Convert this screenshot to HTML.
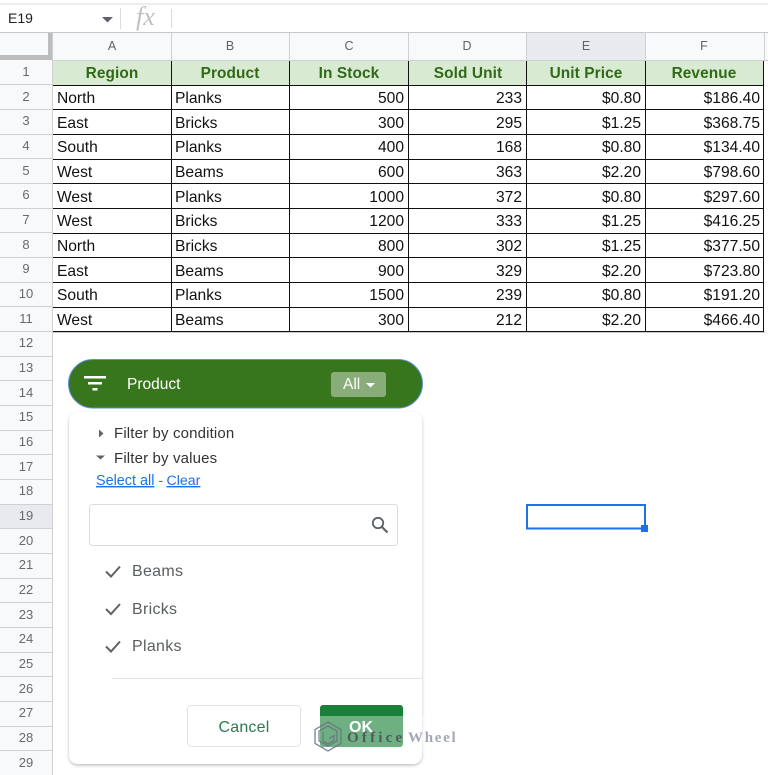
<!DOCTYPE html>
<html><head><meta charset="utf-8"><style>
html,body{margin:0;padding:0;background:#fff;width:768px;height:775px;overflow:hidden}
svg{display:block;font-family:"Liberation Sans",Arial,sans-serif;filter:blur(.3px)}
.d{font-size:15.6px;fill:#111}
.r{font-size:15.6px;fill:#111;text-anchor:end}
.h{font-size:15.4px;font-weight:bold;fill:#2f6a16;text-anchor:middle;letter-spacing:.1px}
.c{font-size:12.5px;fill:#5f6368;text-anchor:middle}
.n{font-size:13px;fill:#666a6e;text-anchor:middle}
.p{font-size:15px;fill:#333}
.f{font-size:16px;fill:#5a5e62;letter-spacing:.3px}
</style></head><body>
<svg width="768" height="775" viewBox="0 0 768 775" xmlns="http://www.w3.org/2000/svg">
<rect width="768" height="775" fill="#fff"/>
<rect x="0" y="3" width="768" height="2" fill="#eceef0"/>
<text x="8" y="23" font-size="14" fill="#202124">E19</text>
<path d="M102 17h11l-5.500 5.500z" fill="#5f6368"/>
<rect x="120" y="8" width="1" height="21" fill="#dadce0"/>
<rect x="171" y="9" width="1" height="19" fill="#dadce0"/>
<text x="136" y="25" font-family="Liberation Serif" font-style="italic" font-size="26" fill="#bcbfc3">fx</text>
<rect x="0" y="32" width="768" height="1" fill="#c8c9cb"/>

<!-- headers -->
<rect x="0" y="33" width="768" height="27" fill="#f8f9fa"/>
<rect x="527" y="33" width="118" height="27" fill="#e8eaed"/>
<rect x="0" y="60" width="52" height="715" fill="#f8f9fa"/>
<rect x="0" y="504" width="52" height="24" fill="#e8eaed"/>
<rect x="48" y="33" width="4" height="27" fill="#bdbdbd"/>
<rect x="0" y="55" width="52" height="5" fill="#bdbdbd"/>
<g fill="#cfd0d2">
<rect x="52" y="33" width="1" height="27"/><rect x="171" y="33" width="1" height="27"/><rect x="289" y="33" width="1" height="27"/><rect x="408" y="33" width="1" height="27"/><rect x="526" y="33" width="1" height="27"/><rect x="645" y="33" width="1" height="27"/><rect x="764" y="33" width="1" height="27"/>
<rect x="52" y="60" width="716" height="1"/>
<rect x="52" y="60" width="1" height="715"/>
<rect x="0" y="84" width="52" height="1"/><rect x="0" y="109" width="52" height="1"/><rect x="0" y="134" width="52" height="1"/><rect x="0" y="158" width="52" height="1"/><rect x="0" y="183" width="52" height="1"/><rect x="0" y="208" width="52" height="1"/><rect x="0" y="232" width="52" height="1"/><rect x="0" y="257" width="52" height="1"/><rect x="0" y="282" width="52" height="1"/><rect x="0" y="306" width="52" height="1"/><rect x="0" y="331" width="52" height="1"/><rect x="0" y="356" width="52" height="1"/><rect x="0" y="380" width="52" height="1"/><rect x="0" y="405" width="52" height="1"/><rect x="0" y="430" width="52" height="1"/><rect x="0" y="454" width="52" height="1"/><rect x="0" y="479" width="52" height="1"/><rect x="0" y="504" width="52" height="1"/><rect x="0" y="528" width="52" height="1"/><rect x="0" y="553" width="52" height="1"/><rect x="0" y="578" width="52" height="1"/><rect x="0" y="602" width="52" height="1"/><rect x="0" y="627" width="52" height="1"/><rect x="0" y="652" width="52" height="1"/><rect x="0" y="676" width="52" height="1"/><rect x="0" y="701" width="52" height="1"/><rect x="0" y="726" width="52" height="1"/><rect x="0" y="750" width="52" height="1"/>
</g>
<text class="c" x="112" y="50">A</text><text class="c" x="230" y="50">B</text><text class="c" x="349" y="50">C</text><text class="c" x="467" y="50">D</text><text class="c" x="586" y="50">E</text><text class="c" x="704" y="50">F</text>
<text class="n" x="26" y="76">1</text><text class="n" x="26" y="101">2</text><text class="n" x="26" y="125">3</text><text class="n" x="26" y="150">4</text><text class="n" x="26" y="175">5</text><text class="n" x="26" y="199">6</text><text class="n" x="26" y="224">7</text><text class="n" x="26" y="249">8</text><text class="n" x="26" y="273">9</text><text class="n" x="26" y="298">10</text><text class="n" x="26" y="323">11</text><text class="n" x="26" y="347">12</text><text class="n" x="26" y="372">13</text><text class="n" x="26" y="397">14</text><text class="n" x="26" y="421">15</text><text class="n" x="26" y="446">16</text><text class="n" x="26" y="471">17</text><text class="n" x="26" y="495">18</text><text class="n" x="26" y="520">19</text><text class="n" x="26" y="545">20</text><text class="n" x="26" y="569">21</text><text class="n" x="26" y="594">22</text><text class="n" x="26" y="619">23</text><text class="n" x="26" y="643">24</text><text class="n" x="26" y="668">25</text><text class="n" x="26" y="693">26</text><text class="n" x="26" y="717">27</text><text class="n" x="26" y="742">28</text><text class="n" x="26" y="767">29</text>

<!-- table -->
<rect x="53" y="61" width="711" height="24" fill="#d9ead3"/>
<g fill="#111">
<rect x="171" y="61" width="1" height="271"/><rect x="289" y="61" width="1" height="271"/><rect x="408" y="61" width="1" height="271"/><rect x="526" y="61" width="1" height="271"/><rect x="645" y="61" width="1" height="271"/><rect x="763" y="61" width="1" height="271"/>
<rect x="53" y="85" width="711" height="1"/><rect x="53" y="109" width="711" height="1"/><rect x="53" y="134" width="711" height="1"/><rect x="53" y="159" width="711" height="1"/><rect x="53" y="183" width="711" height="1"/><rect x="53" y="208" width="711" height="1"/><rect x="53" y="233" width="711" height="1"/><rect x="53" y="257" width="711" height="1"/><rect x="53" y="282" width="711" height="1"/><rect x="53" y="307" width="711" height="1"/><rect x="53" y="331" width="711" height="1"/>
</g>
<rect x="53" y="332" width="712" height="1" fill="#c8c8c8"/>
<text class="h" x="112" y="78">Region</text><text class="h" x="230" y="78">Product</text><text class="h" x="349" y="78">In Stock</text><text class="h" x="468" y="78">Sold Unit</text><text class="h" x="586" y="78">Unit Price</text><text class="h" x="704" y="78">Revenue</text>

<text class="d" x="57" y="103">North</text><text class="d" x="175" y="103">Planks</text><text class="r" x="404" y="103">500</text><text class="r" x="522" y="103">233</text><text class="r" x="641" y="103">$0.80</text><text class="r" x="760" y="103">$186.40</text>
<text class="d" x="57" y="128">East</text><text class="d" x="175" y="128">Bricks</text><text class="r" x="404" y="128">300</text><text class="r" x="522" y="128">295</text><text class="r" x="641" y="128">$1.25</text><text class="r" x="760" y="128">$368.75</text>
<text class="d" x="57" y="152">South</text><text class="d" x="175" y="152">Planks</text><text class="r" x="404" y="152">400</text><text class="r" x="522" y="152">168</text><text class="r" x="641" y="152">$0.80</text><text class="r" x="760" y="152">$134.40</text>
<text class="d" x="57" y="177">West</text><text class="d" x="175" y="177">Beams</text><text class="r" x="404" y="177">600</text><text class="r" x="522" y="177">363</text><text class="r" x="641" y="177">$2.20</text><text class="r" x="760" y="177">$798.60</text>
<text class="d" x="57" y="202">West</text><text class="d" x="175" y="202">Planks</text><text class="r" x="404" y="202">1000</text><text class="r" x="522" y="202">372</text><text class="r" x="641" y="202">$0.80</text><text class="r" x="760" y="202">$297.60</text>
<text class="d" x="57" y="226">West</text><text class="d" x="175" y="226">Bricks</text><text class="r" x="404" y="226">1200</text><text class="r" x="522" y="226">333</text><text class="r" x="641" y="226">$1.25</text><text class="r" x="760" y="226">$416.25</text>
<text class="d" x="57" y="251">North</text><text class="d" x="175" y="251">Bricks</text><text class="r" x="404" y="251">800</text><text class="r" x="522" y="251">302</text><text class="r" x="641" y="251">$1.25</text><text class="r" x="760" y="251">$377.50</text>
<text class="d" x="57" y="276">East</text><text class="d" x="175" y="276">Beams</text><text class="r" x="404" y="276">900</text><text class="r" x="522" y="276">329</text><text class="r" x="641" y="276">$2.20</text><text class="r" x="760" y="276">$723.80</text>
<text class="d" x="57" y="300">South</text><text class="d" x="175" y="300">Planks</text><text class="r" x="404" y="300">1500</text><text class="r" x="522" y="300">239</text><text class="r" x="641" y="300">$0.80</text><text class="r" x="760" y="300">$191.20</text>
<text class="d" x="57" y="325">West</text><text class="d" x="175" y="325">Beams</text><text class="r" x="404" y="325">300</text><text class="r" x="522" y="325">212</text><text class="r" x="641" y="325">$2.20</text><text class="r" x="760" y="325">$466.40</text>

<!-- selection -->
<rect x="527" y="505" width="118" height="23.500" fill="none" stroke="#1a73e8" stroke-width="2"/>
<rect x="641" y="525" width="7" height="7" fill="#1a73e8"/>

<!-- filter pill -->
<rect x="68.500" y="359.500" width="354" height="48.500" rx="24.250" fill="#38761d" stroke="#5b8fd9" stroke-width="1"/>
<rect x="84" y="376" width="22" height="2.500" fill="#fff"/>
<rect x="88" y="382" width="14" height="2.500" fill="#fff"/>
<rect x="92.500" y="388" width="5" height="2.500" fill="#fff"/>
<text x="127" y="389" font-size="15.500" fill="#fff">Product</text>
<rect x="331" y="372" width="55" height="25" rx="3" fill="#88ad78"/>
<text x="343" y="389" font-size="15.500" fill="#fff">All</text>
<path d="M366 383h9l-4.500 4.500z" fill="#fff"/>

<!-- panel -->
<defs><filter id="s" x="-10%" y="-10%" width="120%" height="120%"><feDropShadow dx="0" dy="1.500" stdDeviation="1.500" flood-color="#000" flood-opacity=".25"/></filter></defs>
<rect x="69" y="412" width="353" height="352" rx="9" fill="#fff" filter="url(#s)"/>
<path d="M99 429.500l4.500 4-4.500 4z" fill="#5f6368"/>
<text class="p" x="114" y="438" letter-spacing=".15">Filter by condition</text>
<path d="M96 455.500h9l-4.500 4z" fill="#5f6368"/>
<text class="p" x="114" y="463" letter-spacing=".15">Filter by values</text>
<text x="96" y="485" font-size="14.400" fill="#1a73e8" text-decoration="underline">Select all</text>
<text x="158.500" y="485" font-size="14" fill="#5f6368">-</text>
<text x="166.500" y="485" font-size="14.200" fill="#1a73e8" text-decoration="underline">Clear</text>
<rect x="89.500" y="504.500" width="308" height="41" rx="3" fill="#fff" stroke="#dadce0"/>
<circle cx="378" cy="523" r="5.200" fill="none" stroke="#5f6368" stroke-width="1.800"/>
<path d="M382 527l5.500 5.500" fill="none" stroke="#5f6368" stroke-width="2.200"/>

<path d="M106 571.500l5 5 9-10" fill="none" stroke="#5f6368" stroke-width="2"/>
<text class="f" x="132" y="576">Beams</text>
<path d="M106 609l5 5 9-10" fill="none" stroke="#5f6368" stroke-width="2"/>
<text class="f" x="132" y="614">Bricks</text>
<path d="M106 646.500l5 5 9-10" fill="none" stroke="#5f6368" stroke-width="2"/>
<text class="f" x="132" y="651">Planks</text>
<rect x="112" y="678" width="310" height="1" fill="#e1e3e6"/>

<rect x="187.500" y="705.500" width="113" height="41" rx="4" fill="#fff" stroke="#dfe1e5"/>
<text x="244" y="732" font-size="16" fill="#2a7a50" text-anchor="middle" letter-spacing=".2">Cancel</text>
<rect x="320" y="705" width="83" height="42" rx="3" fill="#188038"/>
<!-- watermark -->
<rect x="310" y="716" width="146" height="36" fill="#fff" fill-opacity=".38"/>
<text x="361" y="732" font-size="16" font-weight="bold" fill="#fff" text-anchor="middle">OK</text>
<g fill="none" stroke="#6d7480" stroke-width="1.400" stroke-opacity=".85">
<path d="M328 722l13 7.500v14l-13 7.500-13-7.500v-14z"/>
<path d="M328 726l9 5v10l-9 5-9-5v-10z"/>
<path d="M323 732v9l5 3 6-3.500v-5l-5 3"/>
</g>
<text x="347" y="742" font-family="Liberation Serif" font-size="15" font-weight="bold" fill="#4f5a5c" letter-spacing="3.200">Office</text>
<text x="408" y="742" font-family="Liberation Serif" font-size="15" font-weight="bold" fill="#a3a8b3" letter-spacing="1.700">Wheel</text>
</svg>
</body></html>
